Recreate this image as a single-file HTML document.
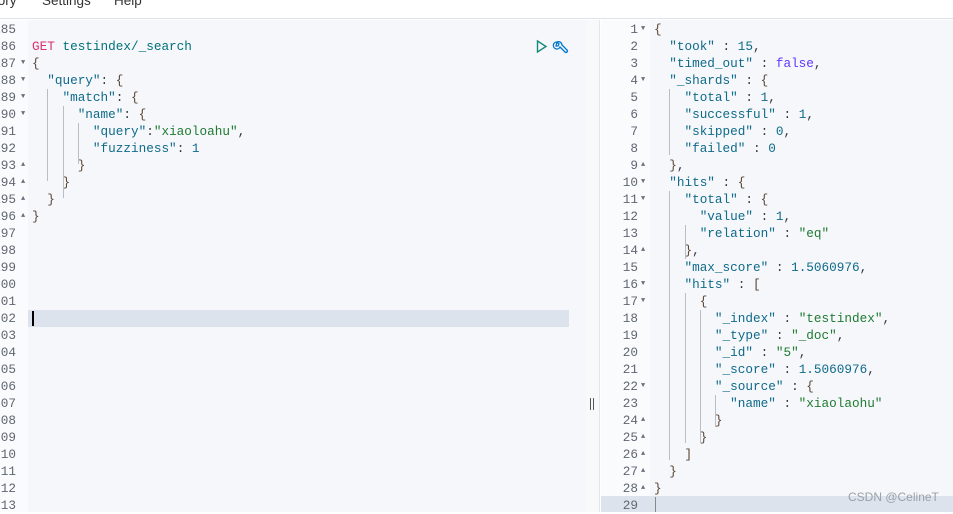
<!DOCTYPE html>
<html><head><meta charset="utf-8"><style>
*{margin:0;padding:0;box-sizing:border-box}
body{width:953px;height:512px;overflow:hidden;background:#fff;position:relative;font-family:"Liberation Mono",monospace;font-size:12.7px}
.menu{position:absolute;left:0;top:0;width:953px;height:19px;border-bottom:1px solid #dfe3e9;background:#fff;font-family:"Liberation Sans",sans-serif;font-size:13.5px;color:#333}
.menu span{position:absolute;top:-7px}
.lg{position:absolute;left:0;top:20px;width:28px;height:492px;background:#fafbfd}
.le{position:absolute;left:28px;top:20px;width:558px;height:492px;background:#f5f7fa}
.mid{position:absolute;left:586px;top:20px;width:14px;height:492px;background:#f8f9fb;border-right:1px solid #e3e6eb}
.rg{position:absolute;left:601px;top:20px;width:49px;height:492px;background:#fafbfd}
.re{position:absolute;left:650px;top:20px;width:303px;height:492px;background:#f5f7fa}
.ln{position:absolute;height:17px;line-height:17px;white-space:pre;color:#5f6672;text-align:right}
.code{position:absolute;height:17px;line-height:17px;white-space:pre;color:#343741}
.ar{position:absolute;font-size:7px;color:#69707d;line-height:17px}
.g{position:absolute;width:1px;background:#b8bec8}
.k{color:#0f6a8a}.s{color:#1f7a32}.n{color:#0f6a8a}.b{color:#5b4636}.m{color:#d6336c}.p{color:#00707a}.f{color:#6236ff}
</style></head><body>
<div class="menu"><span style="left:-6px">tory</span><span style="left:42px">Settings</span><span style="left:114px">Help</span></div>
<div class="lg"></div><div class="le"></div><div class="mid"></div><div class="rg"></div><div class="re"></div>
<div style="position:absolute;left:28px;top:310px;width:541px;height:17px;background:#dde3ec"></div>
<div style="position:absolute;left:32px;top:311px;width:2px;height:15px;background:#000"></div>
<div style="position:absolute;left:601px;top:496px;width:352px;height:16px;background:#dde3ec"></div>
<div style="position:absolute;left:655px;top:497px;width:1px;height:15px;background:#888"></div>
<div style="position:absolute;left:590px;top:398px;width:1px;height:12px;background:#555"></div>
<div style="position:absolute;left:593px;top:398px;width:1px;height:12px;background:#555"></div>
<svg style="position:absolute;left:536px;top:39px" width="36" height="16" viewBox="0 0 36 16"><path d="M1.5 2 L10 7.5 L1.5 13 Z" fill="none" stroke="#168a7b" stroke-width="1.4"/><path d="M21 3 a3.5 3.5 0 1 0 3 5 l5 5 a1.4 1.4 0 0 0 2 -2 l-5 -5 a3.5 3.5 0 0 0 -5 -3 l2 2 -1 2 -2 0z" fill="none" stroke="#0077cc" stroke-width="1.3"/></svg>
<div id="L"></div><div id="R"></div>
<div style="position:absolute;left:848px;top:490px;font-family:'Liberation Sans',sans-serif;font-size:12px;color:#9aa0a8">CSDN @CelineT</div>
<script>
var L=document.getElementById('L'),R=document.getElementById('R');
var left=[
['',0],
['<span class="m">GET</span> <span class="p">testindex/_search</span>',0],
['<span class="b">{</span>',1],
['  <span class="k">"query"</span>: <span class="b">{</span>',1],
['    <span class="k">"match"</span>: <span class="b">{</span>',1],
['      <span class="k">"name"</span>: <span class="b">{</span>',1],
['        <span class="k">"query"</span>:<span class="s">"xiaoloahu"</span>,',0],
['        <span class="k">"fuzziness"</span>: <span class="n">1</span>',0],
['      <span class="b">}</span>',2],
['    <span class="b">}</span>',2],
['  <span class="b">}</span>',2],
['<span class="b">}</span>',2]];
var h='';
for(var i=0;i<29;i++){var y=21+i*17;var num=185+i;
h+='<div class="ln" style="left:-15px;width:31px;top:'+y+'px">'+num+'</div>';
var c=left[i];if(c){if(c[1])h+='<div class="ar" style="left:21px;top:'+y+'px">'+(c[1]==1?'▼':'▲')+'</div>';
h+='<div class="code" style="left:32px;top:'+y+'px">'+c[0]+'</div>';}}
[[47,89,92],[63,106,92],[78,123,41]].forEach(function(g){h+='<div class="g" style="left:'+g[0]+'px;top:'+g[1]+'px;height:'+g[2]+'px"></div>'});
L.innerHTML=h;
var right=[
['<span class="b">{</span>',1],
['  <span class="k">"took"</span> : <span class="n">15</span>,',0],
['  <span class="k">"timed_out"</span> : <span class="f">false</span>,',0],
['  <span class="k">"_shards"</span> : <span class="b">{</span>',1],
['    <span class="k">"total"</span> : <span class="n">1</span>,',0],
['    <span class="k">"successful"</span> : <span class="n">1</span>,',0],
['    <span class="k">"skipped"</span> : <span class="n">0</span>,',0],
['    <span class="k">"failed"</span> : <span class="n">0</span>',0],
['  <span class="b">}</span>,',2],
['  <span class="k">"hits"</span> : <span class="b">{</span>',1],
['    <span class="k">"total"</span> : <span class="b">{</span>',1],
['      <span class="k">"value"</span> : <span class="n">1</span>,',0],
['      <span class="k">"relation"</span> : <span class="s">"eq"</span>',0],
['    <span class="b">}</span>,',2],
['    <span class="k">"max_score"</span> : <span class="n">1.5060976</span>,',0],
['    <span class="k">"hits"</span> : <span class="b">[</span>',1],
['      <span class="b">{</span>',1],
['        <span class="k">"_index"</span> : <span class="s">"testindex"</span>,',0],
['        <span class="k">"_type"</span> : <span class="s">"_doc"</span>,',0],
['        <span class="k">"_id"</span> : <span class="s">"5"</span>,',0],
['        <span class="k">"_score"</span> : <span class="n">1.5060976</span>,',0],
['        <span class="k">"_source"</span> : <span class="b">{</span>',1],
['          <span class="k">"name"</span> : <span class="s">"xiaolaohu"</span>',0],
['        <span class="b">}</span>',2],
['      <span class="b">}</span>',2],
['    <span class="b">]</span>',2],
['  <span class="b">}</span>',2],
['<span class="b">}</span>',2],
['',0]];
h='';
for(var i=0;i<29;i++){var y=21+i*17;var c=right[i];
h+='<div class="ln" style="left:600px;width:38px;top:'+y+'px">'+(i+1)+'</div>';
if(c[1])h+='<div class="ar" style="left:641px;top:'+y+'px">'+(c[1]==1?'▼':'▲')+'</div>';
h+='<div class="code" style="left:654px;top:'+y+'px">'+c[0]+'</div>';}
[[669,89,66],[669,191,269],[685,225,34],[685,293,150],[700,310,133],[715,395,32]].forEach(function(g){h+='<div class="g" style="left:'+g[0]+'px;top:'+g[1]+'px;height:'+g[2]+'px"></div>'});
R.innerHTML=h;
</script>
</body></html>
